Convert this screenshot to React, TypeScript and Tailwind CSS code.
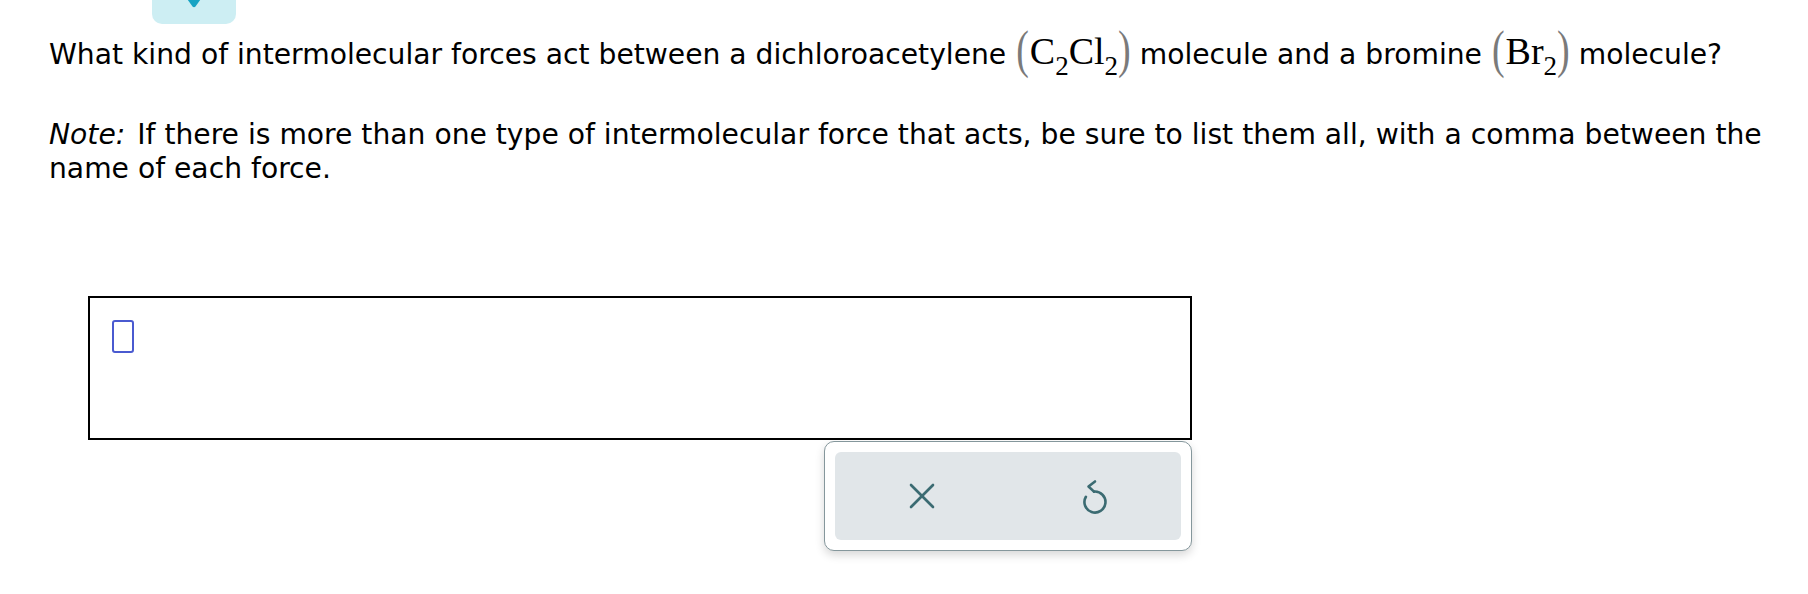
import React from "react";

function Paren({ ch }: { ch: string }) {
  return (
    <span className="inline-block origin-[50%_62%] scale-y-[1.4] text-[#7a7a7a]">{ch}</span>
  );
}

function Sub({ children }: { children: React.ReactNode }) {
  return <span className="relative top-[11px] text-[27px]">{children}</span>;
}

function XIcon() {
  return (
    <svg width="26" height="26" viewBox="0 0 26 26" fill="none" stroke="#3b6b72" strokeWidth="2.6" strokeLinecap="round">
      <path d="M2 2 L24 24" />
      <path d="M24 2 L2 24" />
    </svg>
  );
}

function UndoIcon() {
  return (
    <svg width="30" height="36" viewBox="0 0 30 36" fill="none" stroke="#3b6b72" strokeWidth="2.6" strokeLinecap="round" strokeLinejoin="round">
      <path d="M14 12.6 A10.5 10.5 0 1 1 5.9 17.75" />
      <path d="M15 2.5 L8.5 7.5 L14 12.6" />
    </svg>
  );
}

export default function App() {
  return (
    <div className="w-[1808px] h-[594px] overflow-hidden bg-white text-black font-['DejaVu_Sans',sans-serif]">
      <div className="ml-[152px] w-[84px] h-[24px] rounded-b-[10px] bg-[#cdeef3] relative overflow-hidden">
        <svg className="absolute left-0 top-0" width="84" height="24" viewBox="0 0 84 24">
          <path d="M33 -4 L51 -4 L43.5 6.5 Q42 8 40.5 6.5 Z" fill="#17a3c3" />
        </svg>
      </div>

      <p className="ml-[49px] mt-[8px] text-[28.2px] leading-[34px] whitespace-nowrap">
        What kind of intermolecular forces act between a dichloroacetylene{" "}
        <span className="inline-flex items-baseline ml-[1px] font-['Liberation_Serif',serif] text-[38px] leading-none">
          <Paren ch="(" />
          <span className="ml-[1px]">C</span>
          <Sub>2</Sub>
          <span>Cl</span>
          <Sub>2</Sub>
          <Paren ch=")" />
        </span>{" "}
        molecule and a bromine{" "}
        <span className="inline-flex items-baseline ml-[1px] font-['Liberation_Serif',serif] text-[38px] leading-none">
          <Paren ch="(" />
          <span className="ml-[1px]">Br</span>
          <Sub>2</Sub>
          <Paren ch=")" />
        </span>{" "}
        molecule?
      </p>

      <p className="ml-[49px] mt-[46px] w-[1745px] text-[28.2px] leading-[34px] whitespace-nowrap">
        <em className="italic mr-[3px]">Note:</em>
        <span> If there is more than one type of intermolecular force that acts, be sure to list them all, with a comma between the</span>
        <br />
        <span>name of each force.</span>
      </p>

      <div className="ml-[88px] mt-[110px] w-[1104px]">
        <div className="h-[144px] border-2 border-black bg-white p-[22px]">
          <div className="w-[22px] h-[33px] border-2 border-[#4a5ad0] rounded-[3px]" />
        </div>
        <div className="flex justify-end mt-[1px]">
          <div className="w-[368px] h-[110px] rounded-[10px] border-[1.5px] border-[#85979c] bg-white p-[10px] shadow-[0_4px_10px_rgba(0,0,0,0.16)]">
            <div className="flex h-full rounded-[6px] bg-[#e1e6e9]">
              <div className="flex flex-1 items-center justify-center">
                <XIcon />
              </div>
              <div className="flex flex-1 items-center justify-center pt-[1px]">
                <UndoIcon />
              </div>
            </div>
          </div>
        </div>
      </div>
    </div>
  );
}
